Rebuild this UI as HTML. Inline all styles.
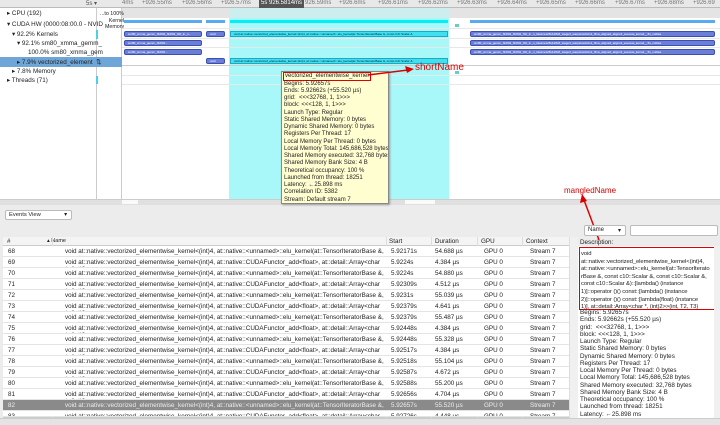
<!DOCTYPE html>
<html><head><style>
*{margin:0;padding:0;box-sizing:border-box}
html,body{width:720px;height:425px;overflow:hidden}
body{background:#ececec;font-family:"Liberation Sans",sans-serif;position:relative;font-size:7px;color:#222}
.a{position:absolute;white-space:nowrap}
.r{position:absolute;top:0;font-size:6px;color:#777}
.k{position:absolute;height:6px;border-radius:2px;background:#6c7fd8;color:#fff;font-size:3px;line-height:5px;overflow:hidden;padding-left:3px;border:1px solid #3a4fb0}
.kc{position:absolute;height:6px;background:#40e0f0;color:#024;font-size:3px;line-height:5px;overflow:hidden;padding-left:3px;border:1px solid #20a8c0}
.row{position:absolute;left:3px;width:566px;height:11px;background:#fff;border-bottom:1px solid #e4e4e4;overflow:hidden}
.row span{position:absolute;top:2px;font-size:6.3px}
.tt{font-size:6px;line-height:7.25px}
.d{font-size:6.3px;line-height:7.25px}
</style></head><body>
<!-- ruler -->
<div class="a" style="left:0;top:0;width:720px;height:8px;background:#e8e8e8;border-bottom:1px solid #bbb"></div>
<div class="a" style="left:86px;top:0;font-size:6px;color:#555">5s ▾</div>
<div class="r" style="left:122px">4ms</div>
<div class="r" style="left:142px">+926.55ms</div>
<div class="r" style="left:182px">+926.56ms</div>
<div class="r" style="left:221px">+926.57ms</div>
<div class="a" style="left:259px;top:0;height:8px;background:#555;color:#fff;font-size:6px;padding:0 2px">5s 926.5814ms</div>
<div class="r" style="left:305px">926.59ms</div>
<div class="r" style="left:339px">+926.6ms</div>
<div class="r" style="left:378px">+926.61ms</div>
<div class="r" style="left:418px">+926.62ms</div>
<div class="r" style="left:457px">+926.63ms</div>
<div class="r" style="left:497px">+926.64ms</div>
<div class="r" style="left:536px">+926.65ms</div>
<div class="r" style="left:575px">+926.66ms</div>
<div class="r" style="left:615px">+926.67ms</div>
<div class="r" style="left:654px">+926.68ms</div>
<div class="r" style="left:693px">+926.69</div>
<!-- left tree -->
<div class="a" style="left:0;top:8px;width:97px;height:192px;background:#fff;border-right:1px solid #ccc"></div>
<div class="a" style="left:97px;top:8px;width:25px;height:192px;background:#fff;border-right:1px solid #ccc"></div>
<div class="a" style="left:122px;top:8px;width:598px;height:192px;background:#fff"></div>
<div class="a" style="left:122px;top:8px;width:598px;height:10px;background:#e4e4e4"></div>
<div class="a" style="left:229px;top:8px;width:220px;height:192px;background:#a8f8fa"></div>
<div class="a" style="left:229px;top:8px;width:220px;height:10px;background:#cdeeee"></div>
<div class="a" style="left:0;top:57px;width:97px;height:10px;background:#6fa6d8"></div>
<div class="a" style="left:97px;top:57px;width:25px;height:10px;background:#6fa6d8"></div>
<div class="a" style="left:7px;top:10px;font-size:6.3px">▸ CPU (192)</div>
<div class="a" style="left:100px;top:11px;font-size:5.3px">...to 100%</div>
<div class="a" style="left:7px;top:21px;font-size:6.3px">▾ CUDA HW (0000:08:00.0 - NVID</div>
<div class="a" style="left:105px;top:19px;font-size:5.3px;line-height:5.5px;text-align:right">Kernel<br>Memory</div>
<div class="a" style="left:12px;top:31px;font-size:6.3px">▾ 92.2% Kernels</div>
<div class="a" style="left:17px;top:40px;font-size:6.3px">▾ 92.1% sm80_xmma_gemm_</div>
<div class="a" style="left:28px;top:49px;font-size:6.3px">100.0% sm80_xmma_gem</div>
<div class="a" style="left:17px;top:59px;font-size:6.3px">▸ 7.9% vectorized_element &nbsp;⇅</div>
<div class="a" style="left:12px;top:68px;font-size:6.3px">▸ 7.8% Memory</div>
<div class="a" style="left:7px;top:77px;font-size:6.3px">▸ Threads (71)</div>
<div class="a" style="left:96px;top:30px;width:2px;height:9px;background:#4cd0e8"></div>
<div class="a" style="left:96px;top:76px;width:2px;height:8px;background:#4cd0e8"></div>
<div class="a" style="left:122px;top:28px;width:598px;height:1px;background:#e8e8e8"></div>
<div class="a" style="left:122px;top:38px;width:598px;height:1px;background:#e8e8e8"></div>
<div class="a" style="left:122px;top:47px;width:598px;height:1px;background:#e8e8e8"></div>
<div class="a" style="left:122px;top:65px;width:598px;height:1px;background:#ccc"></div>
<div class="a" style="left:122px;top:75px;width:598px;height:1px;background:#e8e8e8"></div>
<div class="a" style="left:122px;top:84px;width:598px;height:1px;background:#e8e8e8"></div>
<!-- bars -->
<div class="a" style="left:124px;top:20px;width:78px;height:3px;background:#5aaaf0"></div>
<div class="a" style="left:206px;top:20px;width:19px;height:3px;background:#5aaaf0"></div>
<div class="a" style="left:230px;top:20px;width:218px;height:3px;background:#00f0f8"></div>
<div class="a" style="left:470px;top:20px;width:245px;height:3px;background:#5aaaf0"></div>
<div class="a" style="left:455px;top:24px;width:4px;height:3px;background:#6cc"></div>
<div class="k" style="left:124px;top:31px;width:78px">sm80_xmma_gemm_f32f32_f32f32_f32_tn_n...</div>
<div class="k" style="left:206px;top:31px;width:19px">void at::n...</div>
<div class="kc" style="left:230px;top:31px;width:218px">void at::native::vectorized_elementwise_kernel&lt;(int)4, at::native::&lt;unnamed&gt;::elu_kernel(at::TensorIteratorBase &amp;, const c10::Scalar &amp;</div>
<div class="k" style="left:470px;top:31px;width:245px">sm80_xmma_gemm_f32f32_f32f32_f32_tn_n_tilesize128x128x8_stage3_warpsize2x2x1_ffma_aligna4_alignc4_execute_kernel__5x_cublas</div>
<div class="k" style="left:124px;top:40px;width:78px">sm80_xmma_gemm_f32f32...</div>
<div class="k" style="left:470px;top:40px;width:245px">sm80_xmma_gemm_f32f32_f32f32_f32_tn_n_tilesize128x128x8_stage3_warpsize2x2x1_ffma_aligna4_alignc4_execute_kernel__5x_cublas</div>
<div class="k" style="left:124px;top:49px;width:78px">sm80_xmma_gemm_f32f32...</div>
<div class="k" style="left:470px;top:49px;width:245px">sm80_xmma_gemm_f32f32_f32f32_f32_tn_n_tilesize128x128x8_stage3_warpsize2x2x1_ffma_aligna4_alignc4_execute_kernel__5x_cublas</div>
<div class="k" style="left:206px;top:58px;width:19px">void at::n...</div>
<div class="kc" style="left:230px;top:58px;width:218px">void at::native::vectorized_elementwise_kernel&lt;(int)4, at::native::&lt;unnamed&gt;::elu_kernel(at::TensorIteratorBase &amp;, const c10::Scalar &amp;</div>
<div class="a" style="left:455px;top:71px;width:4px;height:3px;background:#6cc"></div>
<!-- timeline scrollbar -->
<div class="a" style="left:0;top:199px;width:720px;height:6px;background:#e0e0e0;border-top:1px solid #ccc"></div>
<div class="a" style="left:122px;top:200px;width:16px;height:4px;background:#fafafa"></div>
<div class="a" style="left:405px;top:200px;width:30px;height:4px;background:#fafafa"></div>
<!-- tooltip -->
<div class="a tt" style="left:281px;top:71px;width:108px;height:133px;background:#fffed0;border:1px solid #888;padding:0 2px;box-shadow:1px 1px 2px #999;overflow:hidden">
<div style="border:1.5px solid #d00;display:inline-block;padding:0 1px;margin-left:-1px;line-height:6.5px">vectorized_elementwise_kernel</div><br>Begins: 5.92657s<br>Ends: 5.92662s (+55.520 µs)<br>grid: &nbsp;&lt;&lt;&lt;32768, 1, 1&gt;&gt;&gt;<br>block: &lt;&lt;&lt;128, 1, 1&gt;&gt;&gt;<br>Launch Type: Regular<br>Static Shared Memory: 0 bytes<br>Dynamic Shared Memory: 0 bytes<br>Registers Per Thread: 17<br>Local Memory Per Thread: 0 bytes<br>Local Memory Total: 145,686,528 bytes<br>Shared Memory executed: 32,768 bytes<br>Shared Memory Bank Size: 4 B<br>Theoretical occupancy: 100 %<br>Launched from thread: 18251<br>Latency: ←25.898 ms<br>Correlation ID: 5382<br>Stream: Default stream 7</div>
<svg class="a" style="left:0;top:0" width="720" height="425">
<line x1="368" y1="75" x2="408" y2="70" stroke="#d00" stroke-width="1.5"/><polygon points="414,69 405,66 407,73" fill="#d00"/>
<line x1="599" y1="240" x2="584" y2="200" stroke="#d00" stroke-width="1.5"/><polygon points="582,194 580,203 587,201" fill="#d00"/>
</svg>
<div class="a" style="left:415px;top:62px;font-size:10px;color:#d00">shortName</div>
<div class="a" style="left:564px;top:186px;font-size:8px;color:#d00">mangledName</div>
<!-- events view -->
<div class="a" style="left:5px;top:210px;width:67px;height:10px;background:#fff;border:1px solid #bbb;border-radius:2px;font-size:5.8px;padding:1px 3px">Events View<span style="position:absolute;right:4px">▾</span></div>
<div class="a" style="left:3px;top:237px;width:575px;height:181px;background:#fff;border:1px solid #ccc"></div>
<div class="a" style="left:3px;top:237px;width:575px;height:9px;background:#f4f4f4;border-bottom:1px solid #ccc"></div>
<div class="a" style="left:7px;top:238px;font-size:6.3px">#</div>
<div class="a" style="left:47px;top:238px;font-size:5.5px">▴ Name</div>
<div class="a" style="left:52px;top:237px;width:1px;height:181px;background:#ddd"></div>
<div class="a" style="left:386px;top:237px;width:1px;height:181px;background:#ddd"></div>
<div class="a" style="left:431px;top:237px;width:1px;height:181px;background:#ddd"></div>
<div class="a" style="left:477px;top:237px;width:1px;height:181px;background:#ddd"></div>
<div class="a" style="left:522px;top:237px;width:1px;height:181px;background:#ddd"></div>
<div class="a" style="left:389px;top:238px;font-size:6.3px">Start</div>
<div class="a" style="left:435px;top:238px;font-size:6.3px">Duration</div>
<div class="a" style="left:481px;top:238px;font-size:6.3px">GPU</div>
<div class="a" style="left:526px;top:238px;font-size:6.3px">Context</div>
<div class="a" style="left:569px;top:237px;width:9px;height:181px;background:#f0f0f0;border-left:1px solid #ddd"></div>
<div id="rows"></div>
<script>
var d=[["68","5.92171s","54.688 µs",0],["69","5.9224s","4.384 µs",1],["70","5.9224s","54.880 µs",0],["71","5.92309s","4.512 µs",1],["72","5.9231s","55.039 µs",0],["73","5.92379s","4.641 µs",1],["74","5.92379s","55.487 µs",0],["75","5.92448s","4.384 µs",1],["76","5.92448s","55.328 µs",0],["77","5.92517s","4.384 µs",1],["78","5.92518s","55.104 µs",0],["79","5.92587s","4.672 µs",1],["80","5.92588s","55.200 µs",0],["81","5.92656s","4.704 µs",1],["82","5.92657s","55.520 µs",0],["83","5.92726s","4.448 µs",1]];
var n=["void at::native::vectorized_elementwise_kernel&lt;(int)4, at::native::&lt;unnamed&gt;::elu_kernel(at::TensorIteratorBase &amp;, const c...","void at::native::vectorized_elementwise_kernel&lt;(int)4, at::native::CUDAFunctor_add&lt;float&gt;, at::detail::Array&lt;char *, (int)3&gt;&gt;..."];
var h="";d.forEach(function(r,i){var y=246+i*11;var s=r[0]=="82"?"background:#8a8a8a;color:#eee;":"";if(r[0]=="83")s+="height:6px;";
h+='<div class="row" style="top:'+y+'px;'+s+'"><span style="left:5px">'+r[0]+'</span><span style="left:62px;width:320px;overflow:hidden">'+n[r[3]]+'</span><span style="left:388px">'+r[1]+'</span><span style="left:432px">'+r[2]+'</span><span style="left:481px">GPU 0</span><span style="left:527px">Stream 7</span></div>';});
document.getElementById("rows").innerHTML=h;
</script>
<!-- right panel -->
<div class="a" style="left:584px;top:225px;width:42px;height:11px;background:#fff;border:1px solid #bbb;border-radius:2px;font-size:6px;padding:1px 3px">Name<span style="position:absolute;right:4px">▾</span></div>
<div class="a" style="left:630px;top:225px;width:88px;height:11px;background:#fff;border:1px solid #bbb;border-radius:2px"></div>
<div class="a" style="left:580px;top:239px;font-size:6.3px">Description:</div>
<div class="a" style="left:578px;top:246px;width:142px;height:172px;background:#fff"></div>
<div class="a" style="left:579px;top:247px;width:136px;height:63px;border:1.5px solid #d00;padding:3px 1px;overflow:hidden;font-size:5.9px;line-height:7.6px;letter-spacing:-0.1px">void<br>at::native::vectorized_elementwise_kernel&lt;(int)4,<br>at::native::&lt;unnamed&gt;::elu_kernel(at::TensorIterato<br>rBase &amp;, const c10::Scalar &amp;, const c10::Scalar &amp;,<br>const c10::Scalar &amp;)::[lambda() (instance<br>1)]::operator ()() const::[lambda() (instance<br>2)]::operator ()() const::[lambda(float) (instance<br>1)], at::detail::Array&lt;char *, (int)2&gt;&gt;(int, T2, T3)</div>
<div class="a d" style="left:580px;top:309px">Begins: 5.92657s<br>Ends: 5.92662s (+55.520 µs)<br>grid: &nbsp;&lt;&lt;&lt;32768, 1, 1&gt;&gt;&gt;<br>block: &lt;&lt;&lt;128, 1, 1&gt;&gt;&gt;<br>Launch Type: Regular<br>Static Shared Memory: 0 bytes<br>Dynamic Shared Memory: 0 bytes<br>Registers Per Thread: 17<br>Local Memory Per Thread: 0 bytes<br>Local Memory Total: 145,686,528 bytes<br>Shared Memory executed: 32,768 bytes<br>Shared Memory Bank Size: 4 B<br>Theoretical occupancy: 100 %<br>Launched from thread: 18251<br>Latency: ←25.898 ms</div>
<div class="a" style="left:714px;top:246px;width:6px;height:172px;background:#f0f0f0"></div>
<div class="a" style="left:0;top:418px;width:720px;height:7px;background:#e4e4e4;border-top:1px solid #ccc"></div>
</body></html>
